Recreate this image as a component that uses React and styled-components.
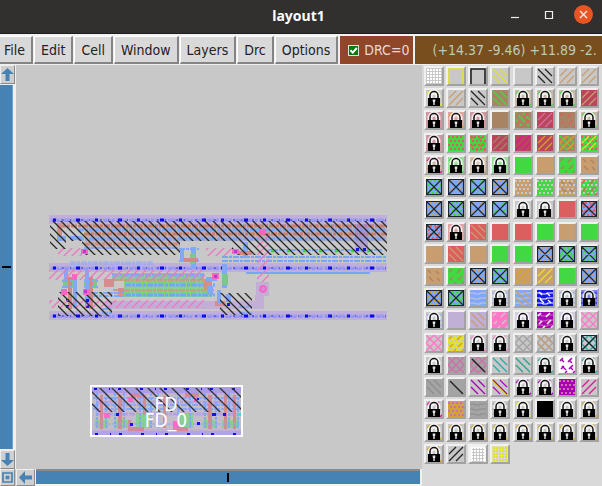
import React, { useState } from 'react';
import styled, { createGlobalStyle, css } from 'styled-components';

const GlobalStyle = createGlobalStyle`
  * {
    box-sizing: border-box;
  }
  body {
    margin: 0;
    background: #d9d9d9;
    font-family: 'DejaVu Sans Condensed', 'DejaVu Sans', sans-serif;
    font-size: 14px;
    color: #222;
  }
  button, input {
    font: inherit;
  }
`;

const Window = styled.div`
  display: flex;
  flex-direction: column;
  height: 100vh;
  overflow: hidden;
`;

const TitleBar = styled.header`
  display: grid;
  grid-template-columns: 1fr auto 1fr;
  align-items: center;
  flex: none;
  height: 34px;
  padding-right: 9px;
  background: #322f2f;
  border-bottom: 1px solid #1c1a1a;
`;

const Title = styled.h1`
  grid-column: 2;
  margin: 0;
  padding: 0 0 2px 4px;
  color: #fff;
  font-family: 'Noto Sans', sans-serif;
  font-size: 14px;
  line-height: 20px;
`;

const WindowControls = styled.div`
  display: flex;
  justify-content: flex-end;
  align-items: center;
  gap: 16px;
  margin-top: -4px;
`;

const WindowButton = styled.button`
  display: flex;
  align-items: center;
  justify-content: center;
  width: ${({ $close }) => ($close ? 19 : 18)}px;
  height: 19px;
  padding: 0;
  border: 0;
  border-radius: 50%;
  background: ${({ $close }) => ($close ? '#e95420' : 'transparent')};
  color: #f0f0f0;
`;

const MenuBar = styled.nav`
  display: flex;
  flex: none;
  gap: 1px;
  height: 31px;
  padding-top: 1px;
  margin-left: -3px;
  border-top: 1px solid #f4f4f4;
  background: #f0f0f0;
  overflow: hidden;
`;

const MenuButton = styled.button`
  flex: none;
  height: 28px;
  padding: 0 6px;
  border: 1px solid #fff;
  border-right: 2px solid #848484;
  border-bottom: 2px solid #848484;
  background: #d9d9d9;
  color: #222;
  white-space: nowrap;
`;

const DrcLabel = styled.label`
  display: flex;
  align-items: center;
  flex: none;
  gap: 5px;
  height: 28px;
  padding: 0 4px 0 8px;
  margin: 0 1px;
  background: #904628;
  color: #e6dcd6;
`;

const DrcCheck = styled.input`
  appearance: none;
  width: 11px;
  height: 11px;
  margin: 0;
  border: 1px solid #d8e8d0;
  background: #fff;
  &:checked {
    background: #0a7a10 url("data:image/svg+xml,%3Csvg xmlns='http://www.w3.org/2000/svg' viewBox='0 0 9 9'%3E%3Cpath d='M1.5 4.2 3.8 6.6 7.8 2' fill='none' stroke='white' stroke-width='2'/%3E%3C/svg%3E");
  }
`;

const Coordinates = styled.output`
  flex: 1;
  min-width: 0;
  height: 28px;
  padding-left: 17px;
  overflow: hidden;
  background: #784f1c;
  color: #bccabb;
  line-height: 28px;
  white-space: nowrap;
`;

const Workspace = styled.main`
  display: grid;
  grid-template-columns: minmax(0, 1fr) 180px;
  flex: 1;
  min-height: 0;
`;

const Viewport = styled.section`
  display: grid;
  grid-template-columns: 16px minmax(0, 1fr);
  grid-template-rows: minmax(0, 1fr) 17px;
  min-height: 0;
  background: #c8c8c8;
`;

const VerticalBar = styled.div`
  display: flex;
  flex-direction: column;
  gap: 1px;
  min-height: 0;
  background: #efefef;
`;

const HorizontalBar = styled.div`
  display: flex;
  gap: 1px;
  min-width: 0;
  padding-right: 2px;
  background: #efefef;
`;

const ArrowButton = styled.button`
  display: flex;
  align-items: center;
  justify-content: center;
  flex: none;
  width: ${({ $wide }) => ($wide ? 19 : 15)}px;
  height: ${({ $tall }) => ($tall ? 19 : 17)}px;
  padding: 0;
  border: 1px solid #eee;
  border-right-color: #8a8a8a;
  border-bottom-color: #8a8a8a;
  background: #cfcfcf;
  color: #4682b4;
`;

const thumb = css`
  appearance: none;
  border: 0;
  border-radius: 0;
  background: #000;
`;

const Scroller = styled.input.attrs({ type: 'range' })`
  appearance: none;
  flex: 1;
  min-width: 0;
  min-height: 0;
  margin: 0;
  background: #4682b4;
  ${({ $vertical }) =>
    $vertical
      ? css`
          writing-mode: vertical-lr;
          width: 13px;
          border-right: 1px solid #6aa3d8;
          &::-webkit-slider-thumb {
            ${thumb}
            width: 9px;
            height: 2px;
          }
        `
      : css`
          height: 17px;
          border-top: 2px solid #8a8a8a;
          border-bottom: 2px solid #f4f4f4;
          &::-webkit-slider-thumb {
            ${thumb}
            width: 2px;
            height: 9px;
          }
        `}
`;

const Drawing = styled.svg`
  display: block;
  width: 100%;
  height: 100%;
`;

const Palette = styled.aside`
  display: grid;
  grid-template-columns: repeat(8, 1fr);
  grid-template-rows: repeat(18, 1fr);
  padding: 0 1px 21px 2px;
  background: #d9d9d9;
`;

const LayerButton = styled.button`
  width: 20px;
  height: 20px;
  margin: 1px 0;
  padding: 0;
  border: 2px solid #f0f0f0;
  border-right-color: #a2a2a2;
  border-bottom-color: #a2a2a2;
  background: #c8c8c8;
  svg {
    display: block;
  }
`;

const COLORS = {
  grey: '#c8c8c8',
  dark: '#a4a4a4',
  mid: '#8e8e8e',
  white: '#ffffff',
  black: '#222222',
  ink: '#000000',
  yellow: '#e2e22e',
  gold: '#d6a41e',
  tan: '#c89e70',
  brown: '#a88464',
  red: '#dc5f5f',
  wine: '#b9465a',
  green: '#42d842',
  blue: '#80a8fa',
  navy: '#1414ee',
  lav: '#c0b0d6',
  pink: '#ff78c8',
  rose: '#d070a8',
  magenta: '#dc1496',
  purple: '#a800b4',
  teal: '#28aaa6',
};

// "background fill:color fill:color", one entry for each layer
const LAYERS = [
  ['grey grid:white', 'grey frame:yellow', 'grey frame:black', 'grey back:yellow', 'grey', 'grey back:black', 'grey fwd:tan', 'grey fwd:tan'],
  ['grey dash:yellow lock', 'grey fwd:tan', 'grey back:black', 'brown back:green', 'brown haze dash:green lock', 'brown haze dash:green lock', 'brown haze dash:green lock', 'wine fwd:tan'],
  ['wine haze lock', 'red haze dash:gold lock', 'wine haze lock', 'brown', 'brown back:green dash:red', 'wine fwd:rose', 'brown dash:red', 'brown haze dash:green lock'],
  ['wine haze lock', 'green dots:red', 'green dots:red dash:red', 'wine fwd:brown', 'wine fwd:magenta', 'wine fwd:gold', 'brown back:green fwd:gold', 'green dots:red fwd:yellow'],
  ['brown haze dash:magenta lock', 'green haze dash:green lock', 'tan haze dash:tan lock', 'green haze lock', 'green', 'tan', 'green dash:brown', 'tan dashback:brown'],
  ['blue dots:green net', 'blue dash:tan net', 'blue dash:green net', 'blue dots:tan net', 'tan dots:grey', 'green dots:grey', 'tan dots:grey dashback:brown', 'green dots:grey dash:red'],
  ['blue dots:tan net', 'blue dots:green net', 'blue dash:tan net', 'blue dash:green net', 'grey lock', 'grey lock', 'red', 'blue dash:red dots:red net'],
  ['blue dots:red dash:red net', 'red haze lock', 'red back:tan', 'red', 'red', 'green', 'tan', 'green'],
  ['tan', 'red back:tan', 'tan', 'green', 'green', 'blue dots:tan net', 'blue wave:green dots:green net', 'blue dots:green net'],
  ['tan dashback:brown', 'green dash:brown', 'blue dots:tan net', 'blue dots:green net', 'tan fwd:gold', 'tan fwd:yellow', 'green', 'blue dots:tan net'],
  ['blue dots:gold net', 'blue wave:green dots:green net', 'blue wave:grey', 'grey wave:blue lock', 'blue wave:grey back:tan', 'navy wave:white dashback:white', 'grey wave:blue lock', 'navy haze wave:navy lock'],
  ['grey wave:blue lock', 'lav', 'lav back:tan', 'pink dash:grey', 'lav haze lock', 'purple wave:rose dash:white', 'lav haze lock', 'grey cross:pink'],
  ['grey cross:pink', 'yellow dots:grey dash:gold', 'grey dash:pink lock', 'grey dash:pink lock', 'grey cross:dark', 'grey cross:dark back:tan', 'grey lock', 'grey cross:teal net'],
  ['grey lock', 'dark cross:rose', 'dark cross:rose slash:black', 'grey back:teal', 'grey fine:tan back:teal', 'grey dash:teal lock', 'white dashback:purple dash:purple', 'grey dash:teal lock'],
  ['dark back:mid', 'dark slash:black', 'grey back:purple', 'grey back:purple fine:gold', 'grey dash:purple lock', 'grey dash:purple lock', 'purple dots:rose', 'grey fwd:magenta'],
  ['grey dash:magenta lock', 'gold cross:tan dots:rose', 'dark wave:mid', 'grey wave:dark lock', 'grey dash:yellow lock', 'ink', 'grey lock', 'grey dash:gold lock'],
  Array(8).fill('grey dash:gold lock'),
  ['grey dash:gold lock', 'grey fwd:black', 'grey grid:white frame:white', 'grey grid:yellow frame:yellow haze grid:yellow'],
];

const Lock = () => (
  <g>
    <path d="M4 8V6a4 4 0 0 1 8 0v2" fill="none" stroke="#fff" strokeOpacity="0.8" strokeWidth="5" />
    <path d="M4 9V5.500a4 4 0 0 1 8 0V9" fill="none" stroke="#111" strokeWidth="1.500" />
    <path d="M2 8h12v8H2z" fill="#000" />
    <path d="M6.700 9.500h2.600v2l-.6.8V15H7.300v-2.700l-.6-.8z" fill="#e8e4e0" />
  </g>
);

const FILLS = {
  grid: c => [2, 5, 8, 11, 14].flatMap(y =>
    [2, 5, 8, 11, 14].map(x => <rect key={`${x}-${y}`} x={x - 1} y={y - 1} width="2" height="2" fill={c} />)
  ),
  dots: c => [2, 6, 10, 14].flatMap((y, i) =>
    [1, 5, 9, 13].map(x => (
      <rect key={`${x}-${y}`} x={x + (i % 2) * 2 - 1} y={y - 1} width="2" height="2" fill={c} />
    ))
  ),
  frame: c => <path d="M1 16V1h14v15" fill="none" stroke={c} strokeWidth="1.600" />,
  back: c => <path d="M1 8l7 7M1 1l14 14M8 1l7 7" stroke={c} strokeWidth="1.300" />,
  fine: c => <path d="M0 8l8 8M0 1l15 15M8 0l8 8" stroke={c} strokeWidth="1" />,
  slash: c => <path d="M2 2l13 13" stroke={c} strokeWidth="1.400" />,
  fwd: c => <path d="M1 8l7-7M1 15L15 1M8 15l7-7" stroke={c} strokeWidth="1.300" />,
  cross: c => (
    <path d="M0 8l8 8M0 0l16 16M8 0l8 8M0 8l8-8M0 16L16 0M8 16l8-8" fill="none" stroke={c} strokeWidth="1.400" />
  ),
  dash: c => <path d="M1 4l3-3M9 5l4-4M2 12l3-3M10 12l4-4M6 16l2-2M14 16l2-2" stroke={c} strokeWidth="1.500" />,
  dashback: c => <path d="M2 2l3 3M10 3l3 3M3 9l4 4M11 10l3 3" stroke={c} strokeWidth="1.400" />,
  wave: c => (
    <path d="M0 3h4l1 1h4l1-1h6M0 8h3l1 1h5l1-1h6M0 13h5l1 1h4l1-1h5" fill="none" stroke={c} strokeWidth="1.200" />
  ),
  net: () => <path d="M.5.5h15v15H.5zM1 1l14 14M15 1L1 15" fill="none" stroke="#1c2630" strokeWidth="1.200" />,
  haze: () => <path d="M0 0h16v16H0z" fill="#e8e8e8" fillOpacity="0.500" />,
  lock: () => <Lock />,
};

const Swatch = ({ spec }) => {
  const [bg, ...fills] = spec.split(' ');
  return (
    <svg width="16" height="16" viewBox="0 0 16 16" aria-hidden="true">
      <rect width="16" height="16" fill={COLORS[bg]} />
      {fills.map((fill, i) => {
        const [kind, color] = fill.split(':');
        return <g key={i}>{FILLS[kind](COLORS[color])}</g>;
      })}
    </svg>
  );
};

const Arrow = ({ turn }) => (
  <svg width="13" height="13" viewBox="0 0 13 13" aria-hidden="true">
    <path transform={`rotate(${turn} 6.5 6.5)`} d="M6.500 0L13 6H8.500v7h-4V6H0z" fill="currentColor" />
  </svg>
);

const Rail = ({ y }) => (
  <g>
    <rect x="49" y={y - 5} width="338" height="9" fill="#c0afd8" />
    <path d={`M51 ${y}H386`} stroke="#9c9cf0" strokeWidth="3" strokeDasharray="8 1 3 1" />
    <path d={`M52 ${y + 1}H386`} stroke="#8488f8" strokeWidth="1" strokeDasharray="3 2 5 3" />
    <path d={`M53 ${y}H386`} stroke="#0808f4" strokeWidth="3" strokeDasharray="3 20 4 15" />
    <path d={`M62 ${y}H386`} stroke="#3030d0" strokeWidth="1" strokeDasharray="2 6 1 10" />
  </g>
);

const stripes = (x1, x2, ys, color, width = 2) =>
  ys.map(y => (
    <path key={`${x1}-${y}`} d={`M${x1} ${y}H${x2}`} stroke={color} strokeWidth={width} strokeDasharray="6 1 3 1" />
  ));

const rects = (list, fill) =>
  list.map(([x, y, w, h]) => <rect key={`${x}-${y}`} x={x} y={y} width={w} height={h} fill={fill} />);

const Chip = () => (
  <g>
    <Rail y={220} />
    <Rail y={268} />
    <Rail y={316} />

    {/* metal bus */}
    <rect x="85" y="224" width="302" height="17" fill="#b9b0bc" />
    <rect x="85" y="241" width="95" height="8" fill="#bfb8bc" />
    {stripes(60, 386, [226], '#c87f74', 3)}
    {stripes(84, 386, [234], '#c87f74', 3)}
    {stripes(84, 180, [244], '#ce8c80', 3)}
    {stripes(78, 386, [230, 239], '#7fa8fa', 3)}
    {stripes(84, 178, [248], '#7fa8fa')}
    {rects([[57, 223, 5, 18]], '#d58d8d')}
    {rects([[58, 236, 8, 5], [70, 236, 12, 4]], '#80a8f8')}
    <rect x="355" y="224" width="13" height="28" fill="#9c80dc" fillOpacity="0.500" />

    {/* upper routing */}
    {stripes(70, 153, [262, 264], '#88aaf8', 1)}
    {stripes(222, 387, [257, 261], '#78a4fa')}
    <path d="M246 273H370" stroke="#78a4fa" strokeWidth="2" />
    {stripes(268, 382, [250], '#80a8f8')}
    <path d="M271 251H372" stroke="#40d840" strokeWidth="3" strokeDasharray="3 13" />
    {rects([[180, 248, 4, 14], [191, 247, 5, 22], [243, 242, 5, 16], [222, 264, 5, 24]], '#80a8f8')}
    {stripes(179, 199, [249, 261], '#80a8f8')}
    {rects([[190, 254, 5, 10]], '#7ec88c')}
    {rects([[184, 258, 14, 4], [238, 251, 14, 4]], '#d08888')}

    {/* lower purple wells */}
    {rects([[105, 301, 159, 8], [256, 282, 13, 14], [255, 295, 9, 12]], '#c3afd6')}

    {/* transistor array */}
    <rect x="112" y="273" width="92" height="8" fill="#8ec895" />
    <rect x="124" y="279" width="88" height="18" fill="#8cce8c" />
    {stripes(112, 204, [275], '#80a8f8', 3)}
    {stripes(125, 215, [285, 295], '#76a4fa', 3)}
    {stripes(113, 214, [280, 290], '#cb9a88')}
    {stripes(124, 210, [282, 292], '#78d078')}
    {rects([[104, 279, 10, 8], [118, 288, 6, 9], [204, 281, 8, 8], [215, 301, 10, 5]], '#d48c8c')}
    {stripes(92, 124, [293, 296], '#80a8f8')}
    {rects([[206, 277, 11, 4], [207, 286, 6, 9], [217, 290, 4, 14], [226, 294, 5, 8]], '#80a8f8')}
    {rects([[63, 279, 13, 9], [84, 279, 13, 9], [222, 274, 6, 11]], '#7cc88c')}
    {rects([[68, 277, 4, 32], [89, 277, 4, 32]], '#cf8888')}
    {rects([[64, 270, 4, 12], [73, 280, 4, 28], [85, 270, 4, 38]], '#80a8f8')}
    {stripes(62, 76, [281, 287], '#80a8f8')}
    {stripes(84, 98, [281, 287], '#80a8f8')}
    {rects([[66, 299, 3, 3], [66, 305, 3, 3], [86, 299, 3, 3], [86, 305, 3, 3], [227, 303, 3, 3], [356, 248, 3, 3], [363, 248, 3, 3]], '#1414e4')}
    {stripes(102, 113, [309, 313], '#80a8f8')}
    {stripes(239, 252, [307, 313], '#80a8f8')}

    {/* implant hatching */}
    <rect x="58" y="248" width="24" height="8" fill="url(#pinkHatch)" />
    <rect x="206" y="248" width="26" height="8" fill="url(#pinkHatch)" />
    <rect x="257" y="234" width="12" height="48" fill="url(#pinkHatch)" />
    <rect x="49" y="270" width="156" height="10" fill="url(#pinkHatch)" />
    <rect x="49" y="300" width="155" height="8" fill="url(#pinkHatch)" />
    <rect x="50" y="221" width="337" height="20" fill="url(#blackHatch)" />
    <rect x="50" y="241" width="16" height="8" fill="url(#blackHatch)" />
    <rect x="82" y="241" width="98" height="14" fill="url(#blackHatch)" />
    <rect x="232" y="241" width="155" height="14" fill="url(#blackHatch)" />
    <rect x="58" y="292" width="54" height="24" fill="url(#blackHatch)" />
    <rect x="220" y="293" width="32" height="22" fill="url(#blackHatch)" />

    {/* contacts */}
    {rects([[81, 249, 7, 5], [61, 289, 6, 6], [72, 274, 5, 6], [83, 289, 6, 6], [259, 229, 7, 5], [232, 249, 7, 5], [212, 273, 7, 6]], '#fa64c4')}
    {rects([[83, 250, 3, 3], [84, 290, 3, 3], [214, 275, 3, 3], [234, 250, 3, 3]], '#b03ae0')}
    <circle cx="263" cy="289" r="3" fill="#d889d8" stroke="#fa5cc0" strokeWidth="1.500" />
  </g>
);

const Cell = () => (
  <g>
    <rect x="91" y="386" width="151" height="50" fill="#c3b2cf" />
    <rect x="92" y="387" width="149" height="6" fill="#a99bea" />
    <rect x="92" y="395" width="149" height="34" fill="#c4bccb" />
    {stripes(93, 240, [398, 405, 409], '#8aa9f4')}
    {stripes(96, 236, [402, 414], '#b6a4e2', 3)}
    {rects([[95, 420, 13, 8], [116, 420, 13, 8], [136, 413, 14, 15], [179, 413, 14, 15], [203, 420, 12, 8], [222, 420, 17, 8]], '#86cf96')}
    {rects([[100, 395, 3, 34], [118, 395, 4, 34], [131, 393, 13, 4], [143, 395, 3, 20], [163, 396, 3, 32], [185, 393, 14, 4], [208, 395, 4, 34], [224, 395, 3, 34], [233, 395, 3, 34], [128, 420, 3, 10], [128, 427, 16, 4], [173, 427, 15, 4]], '#d08c96')}
    {[97, 106, 115, 124, 140, 151, 158, 178, 190, 205, 216, 229, 238].map(x => (
      <path key={x} d={`M${x} 393V429`} stroke="#84a8f8" strokeWidth="2" strokeDasharray="3 1" />
    ))}
    {stripes(94, 240, [424], '#88aaf6', 1)}
    {rects([[128, 397, 5, 5], [104, 413, 6, 5], [173, 421, 6, 7], [194, 398, 4, 4]], '#f66cc8')}
    <rect x="238" y="413" width="3" height="3" fill="#44d8ee" />
    <rect x="92" y="431" width="149" height="4" fill="#b0a2ec" />
    <path d="M94 389H240M95 434H240" stroke="#0c0cf0" strokeWidth="2" strokeDasharray="3 12 1 8 3 19" />
    {rects([[116, 413, 3, 3], [130, 423, 3, 3], [197, 422, 3, 3], [212, 413, 4, 3], [223, 413, 3, 3], [197, 398, 2, 2]], '#1212ea')}
    <rect x="92" y="388" width="149" height="24" fill="url(#cellHatch)" />
    <rect x="91" y="386" width="151" height="50" fill="none" stroke="#fff" strokeWidth="2" />
    <g fill="#fff" fontSize="19" textAnchor="middle">
      <text x="166" y="411">FD</text>
      <text x="166" y="427">FD_0</text>
    </g>
  </g>
);

const LayoutDrawing = () => (
  <Drawing viewBox="16 65 406 404" preserveAspectRatio="xMinYMin meet" role="img" aria-label="layout1">
    <defs>
      <pattern id="blackHatch" width="8" height="8" patternUnits="userSpaceOnUse">
        <path d="M-1 -1L9 9M-1 7l2 2M7-1l2 2" stroke="#282828" strokeWidth="1.300" />
      </pattern>
      <pattern id="cellHatch" width="12" height="12" patternUnits="userSpaceOnUse">
        <path d="M-1 -1L13 13M-1 11l2 2M11-1l2 2" stroke="#303030" strokeWidth="1.300" />
      </pattern>
      <pattern id="pinkHatch" width="8" height="8" patternUnits="userSpaceOnUse">
        <path d="M-1 9L9-1M-1 1l2-2M7 9l2-2" stroke="#f274c4" strokeWidth="1.300" />
      </pattern>
    </defs>
    <Chip />
    <Cell />
  </Drawing>
);

const MENUS = ['File', 'Edit', 'Cell', 'Window', 'Layers', 'Drc', 'Options'];

const App = () => {
  const [drc, setDrc] = useState(true);

  return (
    <Window>
      <GlobalStyle />
      <TitleBar>
        <Title>layout1</Title>
        <WindowControls>
          <WindowButton aria-label="Minimize">
            <svg width="10" height="10" viewBox="0 0 10 10"><path d="M1 7.500h8" stroke="currentColor" strokeWidth="1.200" /></svg>
          </WindowButton>
          <WindowButton aria-label="Maximize">
            <svg width="10" height="10" viewBox="0 0 10 10"><path d="M1.500 1.500h7v7h-7z" fill="none" stroke="currentColor" strokeWidth="1.200" /></svg>
          </WindowButton>
          <WindowButton $close aria-label="Close">
            <svg width="9" height="9" viewBox="0 0 9 9"><path d="M1 1l7 7M8 1L1 8" stroke="currentColor" strokeWidth="1.300" /></svg>
          </WindowButton>
        </WindowControls>
      </TitleBar>
      <MenuBar>
        {MENUS.map(name => (
          <MenuButton key={name}>{name}</MenuButton>
        ))}
        <DrcLabel>
          <DrcCheck type="checkbox" checked={drc} onChange={e => setDrc(e.target.checked)} />
          DRC=0
        </DrcLabel>
        <Coordinates>(+14.37 -9.46) +11.89 -2.</Coordinates>
      </MenuBar>
      <Workspace>
        <Viewport>
          <VerticalBar>
            <ArrowButton $tall aria-label="Scroll up"><Arrow turn={0} /></ArrowButton>
            <Scroller $vertical defaultValue={50} aria-label="Vertical position" />
            <ArrowButton $tall aria-label="Scroll down"><Arrow turn={180} /></ArrowButton>
          </VerticalBar>
          <LayoutDrawing />
          <ArrowButton aria-label="Fit view">
            <svg width="11" height="11" viewBox="0 0 11 11">
              <path d="M1 1h9v9H1zM4.500 4.500h2v2h-2z" fill="none" stroke="currentColor" strokeWidth="1.700" />
            </svg>
          </ArrowButton>
          <HorizontalBar>
            <ArrowButton $wide aria-label="Scroll left"><Arrow turn={270} /></ArrowButton>
            <Scroller defaultValue={50} aria-label="Horizontal position" />
          </HorizontalBar>
        </Viewport>
        <Palette>
          {LAYERS.flat().map((spec, i) => (
            <LayerButton key={i} aria-label={`Layer ${i + 1}`}>
              <Swatch spec={spec} />
            </LayerButton>
          ))}
        </Palette>
      </Workspace>
    </Window>
  );
};

export default App;
